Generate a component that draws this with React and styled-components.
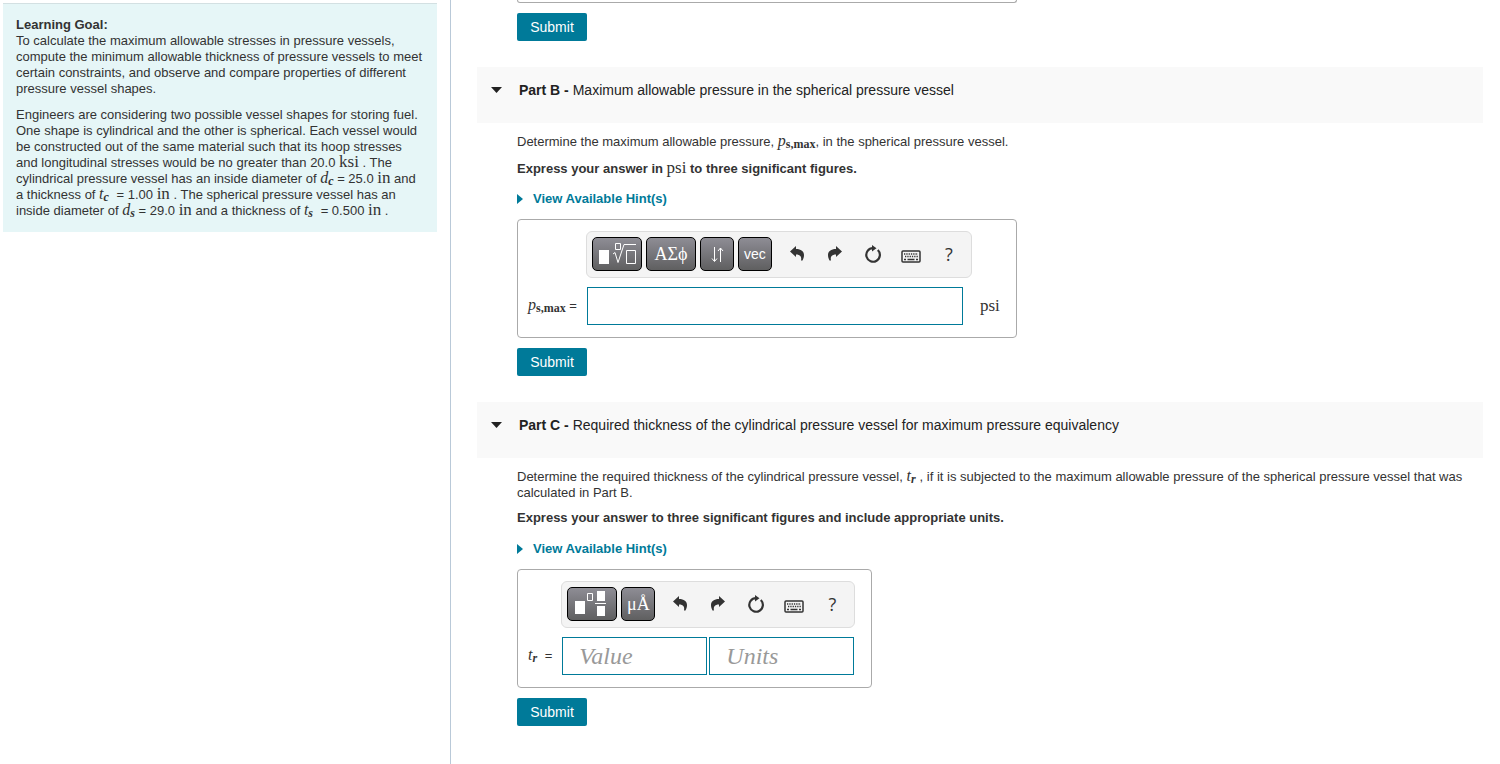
import React from "react";
import styled, { createGlobalStyle, css } from "styled-components";

const GlobalStyle = createGlobalStyle`
  * { box-sizing: border-box; }
  body {
    margin: 0;
    background: #fff;
    color: #333;
    font: 13px/16px "Liberation Sans", Arial, sans-serif;
  }
  p { margin: 0; }
`;

const serif = css`font-family: "Liberation Serif", "Times New Roman", serif;`;

const Page = styled.div`
  display: flex;
  min-height: 100vh;
`;
const Sidebar = styled.aside`
  flex: 0 0 451px;
  padding: 3px 13px 0 3px;
  border-right: 1px solid #b9c9d8;
`;
const GoalCard = styled.section`
  display: flex;
  flex-direction: column;
  gap: 10px;
  padding: 13px 13px 13px;
  border-top: 1px solid #d3e0e2;
  background: #e6f6f7;
`;
const GoalTitle = styled.strong`
  display: block;
`;
const MathText = styled.span`
  ${serif}
  display: inline-block;
  height: 12px;
  font-size: ${(p) => (p.$italic ? "16px" : "17px")};
  font-weight: normal;
  line-height: 12px;
  font-style: ${(p) => (p.$italic ? "italic" : "normal")};
`;
const Sub = styled.sub`
  ${serif}
  display: inline-block;
  height: 8px;
  margin-right: ${(p) => (p.$spaced ? "4px" : "0")};
  font-size: 12px;
  font-weight: bold;
  line-height: 8px;
  font-style: ${(p) => (p.$italic ? "italic" : "normal")};
  vertical-align: -2px;
`;
const Main = styled.main`
  flex: 1;
  min-width: 0;
  padding: 0 17px 12px 26px;
`;
const Part = styled.section`
  margin-bottom: 26px;
`;
const PartHeader = styled.header`
  display: flex;
  gap: 17px;
  height: 56px;
  padding: 15px 14px;
  background: #f9f9f9;
  color: #222;
`;
const PartTitle = styled.h2`
  margin: 0;
  font-size: 14px;
  line-height: 16px;
  font-weight: normal;
`;
const Toggle = styled.button`
  display: flex;
  align-items: center;
  width: 11px;
  height: 16px;
  padding: 0;
  border: 0;
  background: none;
`;
const PartBody = styled.div`
  display: flex;
  flex-direction: column;
  align-items: flex-start;
  padding: ${(p) => (p.$flush ? "0" : "11px")} 0 0 40px;
`;
const Instruction = styled.p`
  margin: ${(p) => (p.$tight ? "9px 0 15px" : "11px 0 14px")};
  font-weight: bold;
`;
const Hint = styled.a`
  display: flex;
  align-items: center;
  gap: 10px;
  margin-bottom: 12px;
  color: #007a99;
  font-weight: bold;
  text-decoration: none;
`;
const AnswerBox = styled.div`
  display: grid;
  grid-template-columns: auto auto auto;
  align-items: center;
  row-gap: 9px;
  padding: 11px 16px 12px 10px;
  border: 1px solid #aaa;
  border-radius: 4px;
`;
const PreviousBox = styled.div`
  width: 500px;
  max-width: 100%;
  height: 3px;
  border: solid #aaa;
  border-width: 0 1px 1px;
  border-radius: 0 0 4px 4px;
`;
const Toolbar = styled.div`
  grid-column: 2;
  display: flex;
  padding: 5px 3px 5px 5px;
  gap: 4px;
  height: 47px;
  border: 1px solid #ddd;
  border-radius: 6px;
  background: #f4f4f4;
`;
const IconRow = styled.div`
  display: flex;
  margin-left: 2px;
`;
const PaletteButton = styled.button`
  ${serif}
  display: flex;
  align-items: center;
  justify-content: center;
  width: ${(p) => (p.$wide ? "50px" : "34px")};
  height: 34px;
  padding: 0;
  border: 1px solid #000;
  border-radius: 5px;
  background: linear-gradient(#8e8d95, #5f5f60);
  color: #fff;
  font-size: 18px;
`;
const SansLabel = styled.span`
  font: 14px/16px "Liberation Sans", Arial, sans-serif;
`;
const IconButton = styled.button`
  display: flex;
  align-items: center;
  justify-content: center;
  width: 38px;
  height: 34px;
  padding: 0;
  border: 0;
  background: none;
  color: #333;
  font: 18px/20px "Open Sans", "Liberation Sans", sans-serif;
`;
const FieldLabel = styled.label`
  grid-column: 1;
  padding-right: 9px;
  white-space: nowrap;
`;
const Fields = styled.div`
  display: flex;
  gap: 2px;
  padding-left: 1px;
`;
const Field = styled.input`
  ${serif}
  width: ${(p) => (p.$wide ? "376px" : "145px")};
  height: 38px;
  padding: 0 16px;
  border: 1px solid #007a99;
  border-radius: 0;
  background: #fff;
  font-size: 24px;
  &::placeholder { color: #999; font-style: italic; opacity: 1; }
`;
const Unit = styled.span`
  padding: 2px 0 0 8px;
`;
const Submit = styled.button`
  width: 70px;
  height: 28px;
  margin-top: 10px;
  padding: 0;
  border: 0;
  border-radius: 2px;
  background: #007a99;
  color: #fff;
  font: 14px/16px "Liberation Sans", Arial, sans-serif;
`;

const Variable = ({ name, sub, upright, spaced }) => (
  <>
    <MathText $italic>{name}</MathText>
    <Sub $italic={!upright} $spaced={spaced}>{sub}</Sub>
  </>
);

const UndoIcon = () => (
  <svg width="14" height="16" viewBox="0 0 14 16" fill="currentColor">
    <path d="M0 5.500 6 0v3c5 0 8 2.500 8 6 0 2-.5 3.500-1.500 5.500h-1.500c.8-3.500-.5-6-5-6V11z" />
  </svg>
);
const RedoIcon = () => (
  <svg width="14" height="16" viewBox="0 0 14 16" fill="currentColor">
    <path d="M14 5.500 8 0v3c-5 0-8 2.500-8 6 0 2 .5 3.500 1.500 5.500h1.500c-.8-3.500.5-6 5-6V11z" />
  </svg>
);
const ResetIcon = () => (
  <svg width="18" height="18" viewBox="0 0 18 18" fill="none">
    <path d="M9 3.100A6.800 6.800 0 1 0 13.800 5" stroke="currentColor" strokeWidth="2.200" />
    <path d="M8 0 12.500 3.200 8 6.500z" fill="currentColor" />
  </svg>
);
const KeyboardIcon = () => (
  <svg width="20" height="17" viewBox="0 -4 20 17" fill="none" stroke="currentColor">
    <rect x="1" y="1" width="18" height="11" rx="1" strokeWidth="1.500" />
    <path d="M3 4h14M4 6.500h13" strokeDasharray="1.300 1" strokeWidth="1.300" />
    <path d="M3 9.500h2M6.500 9.500h7M15 9.500h2" strokeWidth="1.300" />
  </svg>
);
const RootIcon = () => (
  <svg width="38" height="24" viewBox="0 0 38 24" fill="none" stroke="#fff">
    <path d="M1 8h10v14H1z" fill="#fff" stroke="none" />
    <path d="M17.500 1.500h5v6h-5z" />
    <path d="m15 12 2-1.500 3 10L26 2.500H38" />
    <path d="M28.500 8.500h9v13h-9z" />
  </svg>
);
const TemplateIcon = () => (
  <svg width="34" height="26" viewBox="0 0 34 26" fill="#fff">
    <path d="M0 10h10v13H0zM22 0h8v10h-8zM22 15h8v10h-8zM20 12h11v1H20z" />
    <path d="M12.500 2.500h5v7h-5z" fill="none" stroke="#fff" />
  </svg>
);
const ArrowsIcon = () => (
  <svg width="14" height="18" viewBox="0 0 14 18" fill="none" stroke="#fff">
    <path d="M4.500 2v14M2 13.500l2.500 3 2.500-3M10.500 17V3M8 6l2.500-3L13 6" />
  </svg>
);

const EditTools = () => (
  <IconRow>
    <IconButton type="button" aria-label="Undo"><UndoIcon /></IconButton>
    <IconButton type="button" aria-label="Redo"><RedoIcon /></IconButton>
    <IconButton type="button" aria-label="Reset"><ResetIcon /></IconButton>
    <IconButton type="button" aria-label="Keyboard shortcuts"><KeyboardIcon /></IconButton>
    <IconButton type="button" aria-label="Help">?</IconButton>
  </IconRow>
);

const Header = ({ part, title }) => (
  <PartHeader>
    <Toggle type="button" aria-label={"Collapse " + part}>
      <svg width="11" height="6" viewBox="0 0 11 6"><path d="M0 0h11L5.500 6z" fill="#222" /></svg>
    </Toggle>
    <PartTitle><strong>{part} - </strong>{title}</PartTitle>
  </PartHeader>
);

const Hints = () => (
  <Hint href="#hints">
    <svg width="6" height="10" viewBox="0 0 6 10"><path d="M0 0v10l6-5z" fill="currentColor" /></svg>
    View Available Hint(s)
  </Hint>
);

export default function App() {
  return (
    <Page>
      <GlobalStyle />
      <Sidebar>
        <GoalCard>
          <p>
            <GoalTitle>Learning Goal:</GoalTitle>
            To calculate the maximum allowable stresses in pressure vessels, compute the minimum
            allowable thickness of pressure vessels to meet certain constraints, and observe and
            compare properties of different pressure vessel shapes.
          </p>
          <p>
            Engineers are considering two possible vessel shapes for storing fuel. One shape is
            cylindrical and the other is spherical. Each vessel would be constructed out of the
            same material such that its hoop stresses and longitudinal stresses would be no
            greater than 20.0 <MathText>ksi</MathText> . The cylindrical pressure vessel has an
            inside diameter of <Variable name="d" sub="c" /> = 25.0 <MathText>in</MathText> and a
            thickness of <Variable name="t" sub="c" spaced /> = 1.00 <MathText>in</MathText> . The
            spherical pressure vessel has an inside diameter of <Variable name="d" sub="s" /> =
            29.0 <MathText>in</MathText> and a thickness of <Variable name="t" sub="s" spaced /> = 0.500{" "}
            <MathText>in</MathText> .
          </p>
        </GoalCard>
      </Sidebar>
      <Main>
        <Part>
          <PartBody $flush>
            <PreviousBox />
            <Submit type="button">Submit</Submit>
          </PartBody>
        </Part>
        <Part>
          <Header part="Part B" title="Maximum allowable pressure in the spherical pressure vessel" />
          <PartBody>
            <p>
              Determine the maximum allowable pressure, <Variable name="p" sub="s,max" upright />,
              in the spherical pressure vessel.
            </p>
            <Instruction>
              Express your answer in <MathText>psi</MathText> to three significant figures.
            </Instruction>
            <Hints />
            <AnswerBox>
              <Toolbar>
                <PaletteButton type="button" $wide aria-label="Templates"><RootIcon /></PaletteButton>
                <PaletteButton type="button" $wide>ΑΣϕ</PaletteButton>
                <PaletteButton type="button" aria-label="Sub and superscripts"><ArrowsIcon /></PaletteButton>
                <PaletteButton type="button"><SansLabel>vec</SansLabel></PaletteButton>
                <EditTools />
              </Toolbar>
              <FieldLabel htmlFor="pressure"><Variable name="p" sub="s,max" upright /> =</FieldLabel>
              <Fields><Field $wide id="pressure" /></Fields>
              <Unit><MathText>psi</MathText></Unit>
            </AnswerBox>
            <Submit type="button">Submit</Submit>
          </PartBody>
        </Part>
        <Part>
          <Header part="Part C" title="Required thickness of the cylindrical pressure vessel for maximum pressure equivalency" />
          <PartBody>
            <p>
              Determine the required thickness of the cylindrical pressure
              vessel, <Variable name="t" sub="r" spaced />, if it is subjected to the maximum allowable
              pressure of the spherical pressure vessel that was calculated in Part B.
            </p>
            <Instruction $tight>
              Express your answer to three significant figures and include appropriate units.
            </Instruction>
            <Hints />
            <AnswerBox>
              <Toolbar>
                <PaletteButton type="button" $wide aria-label="Templates"><TemplateIcon /></PaletteButton>
                <PaletteButton type="button">μÅ</PaletteButton>
                <EditTools />
              </Toolbar>
              <FieldLabel htmlFor="thickness"><Variable name="t" sub="r" spaced /> =</FieldLabel>
              <Fields>
                <Field id="thickness" placeholder="Value" />
                <Field aria-label="Units" placeholder="Units" />
              </Fields>
            </AnswerBox>
            <Submit type="button">Submit</Submit>
          </PartBody>
        </Part>
      </Main>
    </Page>
  );
}
